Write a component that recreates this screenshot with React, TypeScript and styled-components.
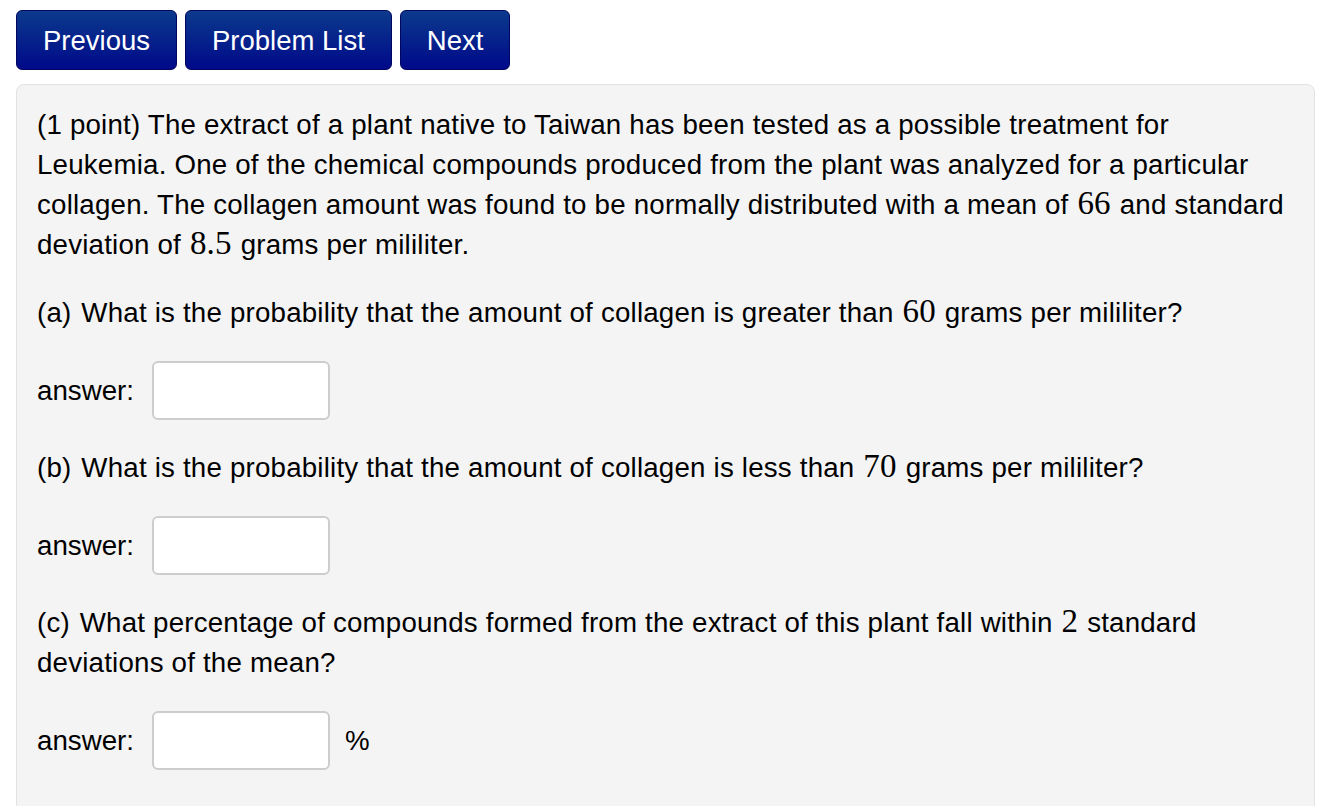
import React from 'react';
import styled, { createGlobalStyle } from 'styled-components';

const GlobalStyle = createGlobalStyle`
  body {
    margin: 0;
    background: #ffffff;
    font-family: "Liberation Sans", Arial, Helvetica, sans-serif;
    color: #000;
  }
`;

const Page = styled.div`
  padding: 10px 7px 0 16px;
`;

const NavBar = styled.div`
  display: flex;
  gap: 8px;
  margin-bottom: 14px;
`;

const NavButton = styled.button`
  height: 60px;
  padding: 0 26px;
  border: 1px solid #00055e;
  border-radius: 6px;
  background: linear-gradient(to bottom, #0b3a8c 0%, #00098a 100%);
  color: #fff;
  font-family: "Liberation Sans", Arial, sans-serif;
  font-size: 27.5px;
  line-height: 1;
  padding-top: 2px;
  cursor: pointer;
`;

const Panel = styled.div`
  background: #f4f4f4;
  border: 1px solid #e3e3e3;
  border-radius: 8px;
  padding: 20px 20px 40px 20px;
  display: flex;
  flex-direction: column;
  gap: 28px;
  min-height: 720px;
`;

const Text = styled.p`
  margin: 0;
  font-size: 27.7px;
  line-height: 40px;
  letter-spacing: 0.2px;
`;

const Part = styled.span`
  margin-right: 2px;
`;

const Num = styled.span`
  font-family: "Liberation Serif", "Times New Roman", serif;
  font-size: 33px;
  line-height: 1;
  margin: 0 1px;
`;

const AnswerRow = styled.div`
  display: flex;
  align-items: center;
  font-size: 27.7px;
`;

const Label = styled.span`
  width: 115px;
`;

const AnswerInput = styled.input`
  width: 178px;
  height: 59px;
  box-sizing: border-box;
  border: 2px solid #cdcdcd;
  border-radius: 6px;
  background: #fff;
  font-size: 24px;
  padding: 0 10px;
`;

const Unit = styled.span`
  margin-left: 15px;
`;

const Answer: React.FC<{ unit?: string }> = ({ unit }) => (
  <AnswerRow>
    <Label>answer:</Label>
    <AnswerInput type="text" />
    {unit && <Unit>{unit}</Unit>}
  </AnswerRow>
);

export default function App() {
  return (
    <Page>
      <GlobalStyle />
      <NavBar>
        <NavButton>Previous</NavButton>
        <NavButton>Problem List</NavButton>
        <NavButton>Next</NavButton>
      </NavBar>
      <Panel>
        <Text>
          (1 point) The extract of a plant native to Taiwan has been tested as a possible treatment for<br />
          Leukemia. One of the chemical compounds produced from the plant was analyzed for a particular<br />
          collagen. The collagen amount was found to be normally distributed with a mean of <Num>66</Num> and
          standard<br />
          deviation of <Num>8.5</Num> grams per mililiter.
        </Text>
        <Text>
          <Part>(a)</Part> What is the probability that the amount of collagen is greater than <Num>60</Num> grams
          per mililiter?
        </Text>
        <Answer />
        <Text>
          <Part>(b)</Part> What is the probability that the amount of collagen is less than <Num>70</Num> grams per
          mililiter?
        </Text>
        <Answer />
        <Text>
          <Part>(c)</Part> What percentage of compounds formed from the extract of this plant fall within{' '}
          <Num>2</Num> standard<br />
          deviations of the mean?
        </Text>
        <Answer unit="%" />
      </Panel>
    </Page>
  );
}
